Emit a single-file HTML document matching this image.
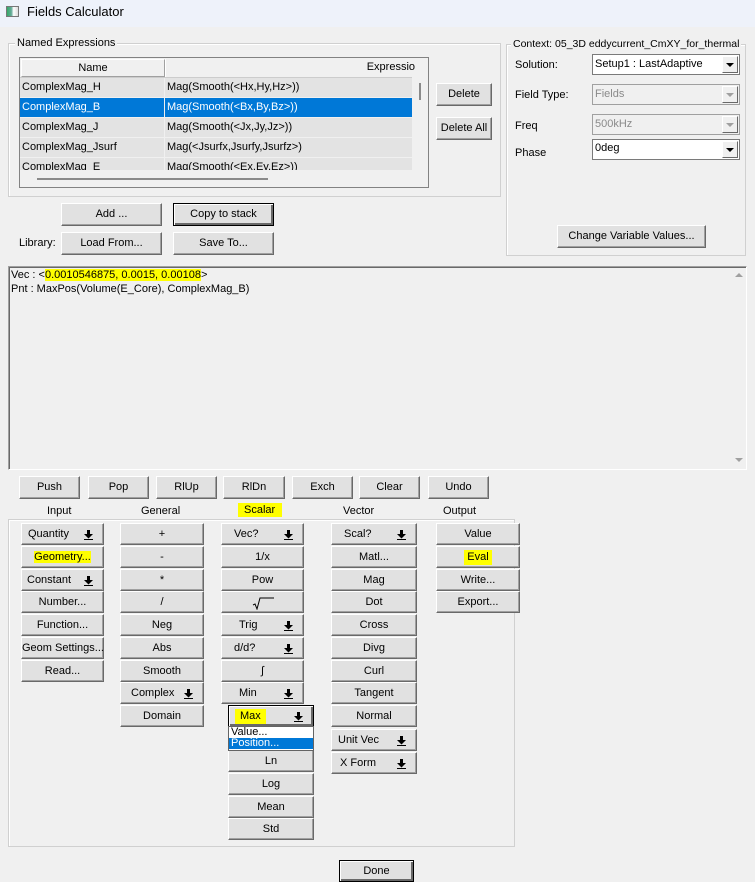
<!DOCTYPE html>
<html><head><style>
*{margin:0;padding:0;box-sizing:border-box}
body{width:755px;height:882px;background:#f0f0f0;font-family:"Liberation Sans",sans-serif;font-size:11px;color:#000;position:relative;overflow:hidden}
.a{position:absolute}
.b{position:absolute;height:22px;background:#e1e1e1;border:1px solid;border-color:#fff #696969 #696969 #fff;box-shadow:inset -1px -1px 0 #a0a0a0;text-align:center;line-height:21px;font-size:11px;white-space:nowrap}
.b.d{border:1px solid #000;box-shadow:inset 1px 1px 0 #fff,inset -2px -2px 0 #696969}
.ar{position:absolute;right:10px;top:6px;width:9px;height:10px}
.g{position:absolute;border:1px solid #d0d0d0;box-shadow:1px 1px 0 #fff inset}
.gl{position:absolute;background:#f0f0f0;padding:0 2px;font-size:11px}
.hl{background:#ffff00}
.row{position:absolute;left:0;height:20px;line-height:19px;border-bottom:1px solid #f0f0f0;background:#e3e3e3;width:392px}
.row span{position:absolute;top:0}
.dd{position:absolute;height:21px;background:#fff;border:1px solid #7a7a7a;font-size:11px;line-height:19px;padding-left:2px}
.dd.dis{background:#f0f0f0;color:#8a8a8a;border-color:#a0a0a0}
.dd i{position:absolute;right:1px;top:1px;width:16px;height:17px;background:#f0f0f0;border:1px solid;border-color:#fff #696969 #696969 #fff}
.dd i:after{content:"";position:absolute;left:3px;top:6px;border:4px solid transparent;border-top:4px solid #000;border-bottom:0}
.dd.dis i:after{border-top-color:#a0a0a0}
.lab{position:absolute;font-size:11px}
</style></head><body>
<div class="a" style="left:0;top:0;width:755px;height:27px;background:#eef2fa"></div>
<div class="a" style="left:6px;top:6px;width:13px;height:11px;border:1px solid #777;background:linear-gradient(90deg,#3a6 0,#6a9 40%,#fff 60%,#ddd)"></div>
<div class="a" style="left:27px;top:4px;font-size:13px">Fields Calculator</div>

<div class="g" style="left:8px;top:43px;width:493px;height:154px"></div>
<div class="gl" style="left:15px;top:37px">Named Expressions</div>
<div class="a" style="left:19px;top:57px;width:410px;height:131px;border:1px solid #828282;background:#f0f0f0;overflow:hidden">
 <div class="a" style="left:0;top:0;width:392px;height:20px;background:#f0f0f0;border-bottom:1px solid #ccc"></div>
 <div class="a" style="left:1px;top:1px;width:144px;height:18px;border:1px solid;border-color:#fff #a0a0a0 #a0a0a0 #fff;text-align:center;line-height:16px">Name</div>
 <div class="a" style="left:145px;top:1px;width:250px;height:18px;border-left:1px solid #fff;text-align:right;line-height:16px">Expressio</div>
 <div class="row" style="top:20px"><span style="left:2px">ComplexMag_H</span><span style="left:147px">Mag(Smooth(&lt;Hx,Hy,Hz&gt;))</span></div>
 <div class="row" style="top:40px;background:#0078d7;color:#fff"><span style="left:2px">ComplexMag_B</span><span style="left:147px">Mag(Smooth(&lt;Bx,By,Bz&gt;))</span></div>
 <div class="row" style="top:60px"><span style="left:2px">ComplexMag_J</span><span style="left:147px">Mag(Smooth(&lt;Jx,Jy,Jz&gt;))</span></div>
 <div class="row" style="top:80px"><span style="left:2px">ComplexMag_Jsurf</span><span style="left:147px">Mag(&lt;Jsurfx,Jsurfy,Jsurfz&gt;)</span></div>
 <div class="row" style="top:100px;height:13px;overflow:hidden"><span style="left:2px">ComplexMag_E</span><span style="left:147px">Mag(Smooth(&lt;Ex,Ey,Ez&gt;))</span></div>
 <div class="a" style="left:0;top:113px;width:392px;height:18px;background:#f0f0f0"></div>
 <div class="a" style="left:144px;top:20px;width:1px;height:93px;background:#f0f0f0"></div>
 <div class="a" style="left:17px;top:120px;width:231px;height:2px;background:#8a8a8a"></div>
 <div class="a" style="left:399px;top:25px;width:2px;height:17px;background:#8a8a8a"></div>
</div>
<div class="b" style="left:436px;top:83px;width:56px;height:23px">Delete</div>
<div class="b" style="left:436px;top:117px;width:56px;height:23px">Delete All</div>

<div class="b" style="left:61px;top:203px;width:101px;height:23px">Add ...</div>
<div class="b d" style="left:173px;top:203px;width:101px;height:23px">Copy to stack</div>
<div class="lab" style="left:19px;top:237px">Library:</div>
<div class="b" style="left:61px;top:232px;width:101px;height:23px">Load From...</div>
<div class="b" style="left:173px;top:232px;width:101px;height:23px">Save To...</div>

<div class="g" style="left:506px;top:44px;width:240px;height:212px"></div>
<div class="gl" style="left:511px;top:38px;font-size:10.5px">Context: 05_3D eddycurrent_CmXY_for_thermal</div>
<div class="lab" style="left:515px;top:59px">Solution:</div>
<div class="dd" style="left:592px;top:54px;width:148px">Setup1 : LastAdaptive<i></i></div>
<div class="lab" style="left:515px;top:89px">Field Type:</div>
<div class="dd dis" style="left:592px;top:84px;width:148px">Fields<i></i></div>
<div class="lab" style="left:515px;top:120px">Freq</div>
<div class="dd dis" style="left:592px;top:114px;width:148px">500kHz<i></i></div>
<div class="lab" style="left:515px;top:147px">Phase</div>
<div class="dd" style="left:592px;top:139px;width:148px;line-height:17px">0deg<i></i></div>
<div class="b" style="left:557px;top:225px;width:149px;height:23px">Change Variable Values...</div>

<div class="a" style="left:8px;top:266px;width:739px;height:204px;border:1px solid;border-color:#a0a0a0 #fff #fff #a0a0a0;box-shadow:inset 1px 1px 0 #696969;background:#f0f0f0"></div>
<div class="a" style="left:731px;top:268px;width:15px;height:201px;background:#f0f0f0"></div>
<div class="a" style="left:735px;top:273px;border:4px solid transparent;border-bottom:4px solid #a0a0a0;border-top:0"></div>
<div class="a" style="left:735px;top:458px;border:4px solid transparent;border-top:4px solid #a0a0a0;border-bottom:0"></div>
<div class="a" style="left:11px;top:268px;line-height:14px">Vec : &lt;<span class="hl">0.0010546875, 0.0015, 0.00108</span>&gt;<br>Pnt : MaxPos(Volume(E_Core), ComplexMag_B)</div>

<div class="b" style="left:19px;top:476px;width:61px;height:23px">Push</div>
<div class="b" style="left:88px;top:476px;width:61px;height:23px">Pop</div>
<div class="b" style="left:156px;top:476px;width:61px;height:23px">RlUp</div>
<div class="b" style="left:223px;top:476px;width:62px;height:23px">RlDn</div>
<div class="b" style="left:292px;top:476px;width:61px;height:23px">Exch</div>
<div class="b" style="left:359px;top:476px;width:61px;height:23px">Clear</div>
<div class="b" style="left:428px;top:476px;width:61px;height:23px">Undo</div>

<div class="lab" style="left:47px;top:505px">Input</div>
<div class="lab" style="left:141px;top:505px">General</div>
<div class="lab hl" style="left:238px;top:503px;padding:1px 7px 1px 6px">Scalar</div>
<div class="lab" style="left:343px;top:505px">Vector</div>
<div class="lab" style="left:443px;top:505px">Output</div>
<div class="g" style="left:8px;top:519px;width:507px;height:328px"></div>

<svg width="0" height="0" style="position:absolute"><defs><symbol id="ar" viewBox="0 0 9 10"><path d="M3 0h3v4h3l-4.5 4.5L0 4h3z" fill="#000"/><rect x="0" y="9" width="9" height="1"/></symbol></defs></svg>

<div class="b" style="left:21px;top:523px;width:83px;text-align:left;padding-left:6px">Quantity<svg class="ar"><use href="#ar"/></svg></div>
<div class="b" style="left:21px;top:546px;width:83px"><span class="hl">Geometry...</span></div>
<div class="b" style="left:21px;top:569px;width:83px;text-align:left;padding-left:5px">Constant<svg class="ar"><use href="#ar"/></svg></div>
<div class="b" style="left:21px;top:591px;width:83px">Number...</div>
<div class="b" style="left:21px;top:614px;width:83px">Function...</div>
<div class="b" style="left:21px;top:637px;width:83px">Geom Settings...</div>
<div class="b" style="left:21px;top:660px;width:83px">Read...</div>

<div class="b" style="left:120px;top:523px;width:84px">+</div>
<div class="b" style="left:120px;top:546px;width:84px">-</div>
<div class="b" style="left:120px;top:569px;width:84px">*</div>
<div class="b" style="left:120px;top:591px;width:84px">/</div>
<div class="b" style="left:120px;top:614px;width:84px">Neg</div>
<div class="b" style="left:120px;top:637px;width:84px">Abs</div>
<div class="b" style="left:120px;top:660px;width:84px">Smooth</div>
<div class="b" style="left:120px;top:682px;width:84px;text-align:left;padding-left:10px">Complex<svg class="ar"><use href="#ar"/></svg></div>
<div class="b" style="left:120px;top:705px;width:84px">Domain</div>

<div class="b" style="left:221px;top:523px;width:83px;text-align:left;padding-left:12px">Vec?<svg class="ar"><use href="#ar"/></svg></div>
<div class="b" style="left:221px;top:546px;width:83px">1/x</div>
<div class="b" style="left:221px;top:569px;width:83px">Pow</div>
<div class="b" style="left:221px;top:591px;width:83px"><svg width="24" height="14" style="margin-top:4px" viewBox="0 0 24 14"><path d="M2 9l2 -1 2 5 3 -11h14" fill="none" stroke="#000" stroke-width="1"/></svg></div>
<div class="b" style="left:221px;top:614px;width:83px;text-align:left;padding-left:17px">Trig<svg class="ar"><use href="#ar"/></svg></div>
<div class="b" style="left:221px;top:637px;width:83px;text-align:left;padding-left:12px">d/d?<svg class="ar"><use href="#ar"/></svg></div>
<div class="b" style="left:221px;top:660px;width:83px">∫</div>
<div class="b" style="left:221px;top:682px;width:83px;text-align:left;padding-left:17px">Min<svg class="ar"><use href="#ar"/></svg></div>
<div class="b d" style="left:228px;top:705px;width:86px;text-align:left;padding-left:6px"><span class="hl" style="padding:1px 5px 2px 5px">Max</span><svg class="ar"><use href="#ar"/></svg></div>
<div class="b" style="left:228px;top:750px;width:86px">Ln</div>
<div class="a" style="left:228px;top:726px;width:86px;height:25px;background:#fff;border:1px solid #646464;line-height:11px">
 <div style="padding-left:2px">Value...</div>
 <div style="padding-left:2px;background:#0078d7;color:#fff">Position...</div>
</div>
<div class="b" style="left:228px;top:773px;width:86px">Log</div>
<div class="b" style="left:228px;top:796px;width:86px">Mean</div>
<div class="b" style="left:228px;top:818px;width:86px">Std</div>

<div class="b" style="left:331px;top:523px;width:86px;text-align:left;padding-left:12px">Scal?<svg class="ar"><use href="#ar"/></svg></div>
<div class="b" style="left:331px;top:546px;width:86px">Matl...</div>
<div class="b" style="left:331px;top:569px;width:86px">Mag</div>
<div class="b" style="left:331px;top:591px;width:86px">Dot</div>
<div class="b" style="left:331px;top:614px;width:86px">Cross</div>
<div class="b" style="left:331px;top:637px;width:86px">Divg</div>
<div class="b" style="left:331px;top:660px;width:86px">Curl</div>
<div class="b" style="left:331px;top:682px;width:86px">Tangent</div>
<div class="b" style="left:331px;top:705px;width:86px">Normal</div>
<div class="b" style="left:331px;top:729px;width:86px;text-align:left;padding-left:6px">Unit Vec<svg class="ar"><use href="#ar"/></svg></div>
<div class="b" style="left:331px;top:752px;width:86px;text-align:left;padding-left:8px">X Form<svg class="ar"><use href="#ar"/></svg></div>

<div class="b" style="left:436px;top:523px;width:84px">Value</div>
<div class="b" style="left:436px;top:546px;width:84px"><span class="hl" style="padding:1px 3px 2px 3px">Eval</span></div>
<div class="b" style="left:436px;top:569px;width:84px">Write...</div>
<div class="b" style="left:436px;top:591px;width:84px">Export...</div>

<div class="b d" style="left:339px;top:860px;width:75px;height:22px">Done</div>
</body></html>
